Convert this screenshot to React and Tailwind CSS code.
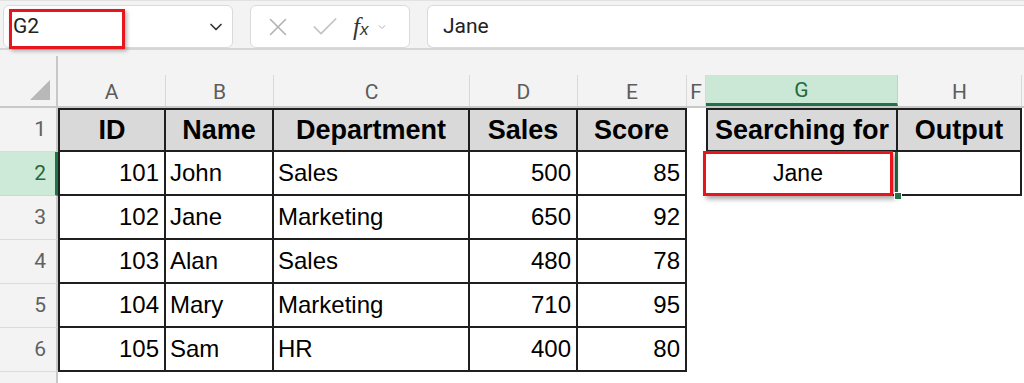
import { X, Check, ChevronDown } from "lucide-react";

const cols = [
  { key: "A", w: "w-[108px]" },
  { key: "B", w: "w-[108px]" },
  { key: "C", w: "w-[196px]" },
  { key: "D", w: "w-[108px]" },
  { key: "E", w: "w-[109px]" },
  { key: "F", w: "w-[19px]" },
  { key: "G", w: "w-[192px]" },
  { key: "H", w: "w-[124px]" },
];

const header = ["ID", "Name", "Department", "Sales", "Score"];

const rows = [
  ["101", "John", "Sales", "500", "85"],
  ["102", "Jane", "Marketing", "650", "92"],
  ["103", "Alan", "Sales", "480", "78"],
  ["104", "Mary", "Marketing", "710", "95"],
  ["105", "Sam", "HR", "400", "80"],
];

const numCols = [0, 3, 4];

const RowHead = ({ n, active }) => (
  <div
    className={
      active
        ? "w-[58px] h-[44px] shrink-0 flex items-center justify-end pr-[9px] bg-[#cde9d7] text-[#1d6b3e] border-r-[3px] border-[#217346] border-b border-b-[#c9d9ce] text-[21px] font-['Roboto',sans-serif]"
        : "w-[58px] h-[44px] shrink-0 flex items-center justify-end pr-[10px] bg-[#f3f3f3] text-[#616161] border-r-2 border-[#c8c8c8] border-b border-b-[#dcdcdc] text-[21px] font-['Roboto',sans-serif]"
    }
  >
    {n}
  </div>
);

const TableCell = ({ w, first, top, align, bold, bg, children }) => (
  <div
    className={[
      w,
      "h-[44px] shrink-0 flex items-center border-r-2 border-b-2 border-[#1f1f1f] text-black",
      first ? "border-l-2" : "",
      top ? "border-t-2" : "",
      bg ? "bg-[#d9d9d9]" : "bg-white",
      bold ? "font-bold text-[27px] justify-center" : "text-[24px]",
      align === "right" ? "justify-end pr-[5px]" : "",
      align === "left" ? "justify-start pl-[4px]" : "",
    ].join(" ")}
  >
    {children}
  </div>
);

const Blank = ({ w }) => <div className={w + " h-[44px] shrink-0 bg-white"} />;

export default function App() {
  return (
    <div className="w-[1024px] h-[383px] overflow-hidden bg-white font-['Liberation_Sans',Arial,sans-serif]">
      {/* formula bar */}
      <div className="h-[50px] bg-[#f3f3f3] border-t border-t-[#e2e2e2] border-b-2 border-b-[#d6d6d6] flex items-end pt-[6px] font-['Roboto',sans-serif]">
        <div className="ml-[3px] w-[230px] h-[43px] bg-white border border-[#dadada] rounded-[6px] relative flex items-center">
          <div className="absolute left-[5px] top-[3px] w-[116px] h-[40px] border-[3px] border-[#e8161c] shadow-[2px_2px_4px_rgba(0,0,0,0.3)]" />
          <span className="ml-[9px] text-[21px] text-[#222]">G2</span>
          <ChevronDown className="ml-auto mr-[6px] w-[20px] h-[20px] text-[#333]" strokeWidth={2} />
        </div>
        <div className="ml-[17px] w-[160px] h-[43px] bg-white border border-[#dadada] rounded-[6px] flex items-center">
          <X className="ml-[12px] w-[30px] h-[30px] text-[#b3b3b3]" strokeWidth={1.3} />
          <Check className="ml-[16px] w-[32px] h-[32px] text-[#c3c3c3]" strokeWidth={1.3} />
          <span className="ml-[12px] text-[25px] italic text-[#333] font-['Liberation_Serif',serif] leading-none">
            f<span className="text-[17px] italic font-['Liberation_Sans',sans-serif]">x</span>
          </span>
          <ChevronDown className="ml-[8px] w-[12px] h-[12px] text-[#9a9a9a]" strokeWidth={1.5} />
        </div>
        <div className="ml-[17px] flex-1 h-[43px] bg-white border border-r-0 border-[#dadada] rounded-l-[6px] flex items-center">
          <span className="ml-[15px] text-[21px] text-[#222]">Jane</span>
        </div>
      </div>

      {/* column headers */}
      <div className="h-[58px] bg-[#f3f3f3] flex border-b-2 border-[#c8c8c8]">
        <div className="w-[58px] shrink-0 flex items-end">
          <div className="w-[58px] h-[50px] border-r-2 border-[#c8c8c8] relative">
            <div className="absolute right-[6px] bottom-[6px] w-0 h-0 border-l-[20px] border-l-transparent border-b-[20px] border-b-[#b8b8b8]" />
          </div>
        </div>
        {cols.map((c) => (
          <div key={c.key} className={c.w + " shrink-0 flex items-end"}>
            <div
              className={
                c.key === "G"
                  ? "w-full h-[31px] flex items-center justify-center pt-[3px] bg-[#cae8d5] text-[#1d6b3e] border-r border-[#b7d8c3] border-b-[3px] border-b-[#217346] text-[21px] font-['Roboto',sans-serif]"
                  : "w-full h-[31px] flex items-center justify-center pt-[4px] text-[#5c5c5c] border-r border-[#d8d8d8] text-[21px] font-['Roboto',sans-serif]"
              }
            >
              {c.key}
            </div>
          </div>
        ))}
        <div className="flex-1" />
      </div>

      {/* row 1 */}
      <div className="flex">
        <RowHead n={1} />
        {header.map((h, i) => (
          <TableCell key={h} w={cols[i].w} first={i === 0} top bold bg>
            {h}
          </TableCell>
        ))}
        <Blank w={cols[5].w} />
        <TableCell w={cols[6].w} first top bold bg>
          Searching for
        </TableCell>
        <TableCell w={cols[7].w} top bold bg>
          Output
        </TableCell>
      </div>

      {/* data rows */}
      {rows.map((r, ri) => (
        <div key={ri} className="flex">
          <RowHead n={ri + 2} active={ri === 0} />
          {r.map((v, i) => (
            <TableCell
              key={i}
              w={cols[i].w}
              first={i === 0}
              align={numCols.includes(i) ? "right" : "left"}
            >
              {v}
            </TableCell>
          ))}
          <Blank w={cols[5].w} />
          {ri === 0 ? (
            <>
              <div className="w-[192px] h-[44px] shrink-0 relative bg-white border-r-[3px] border-[#217346] border-b-2 border-b-[#1f1f1f]">
                <div className="absolute left-[-3px] top-[-1px] w-[190px] h-[45px] border-[3px] border-[#e8161c] bg-white flex items-center justify-center text-[23px] text-black shadow-[3px_3px_5px_rgba(0,0,0,0.35)]">
                  Jane
                </div>
                <div className="absolute right-[-7px] bottom-[-6px] w-[8px] h-[8px] bg-[#217346] border border-white" />
              </div>
              <TableCell w={cols[7].w} />
            </>
          ) : null}
        </div>
      ))}

      {/* row 7, cut off by the window */}
      <div className="flex">
        <div className="w-[58px] h-[44px] shrink-0 bg-[#f3f3f3] border-r-2 border-[#c8c8c8]" />
        <div className="flex-1 h-[44px] bg-white" />
      </div>
    </div>
  );
}
